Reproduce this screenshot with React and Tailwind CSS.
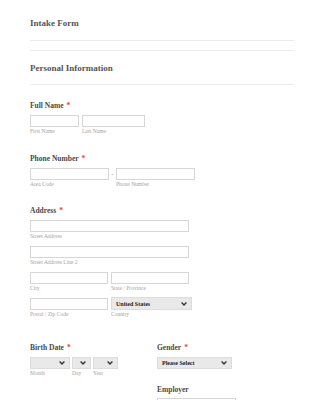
import React from "react";

const Chevron = () => (
  <svg width="6" height="4" viewBox="0 0 6 4" className="shrink-0">
    <path d="M0.6 0.6 L3 3 L5.4 0.6" fill="none" stroke="#333" strokeWidth="1.4" />
  </svg>
);

const Input = ({ w }) => (
  <div className={`h-[12px] border border-[#d6d6d6] bg-white ${w}`} />
);

const Select = ({ w, text }) => (
  <div className={`h-[12px] bg-[#e9e9e9] border border-[#dcdcdc] flex items-center justify-between pl-[4px] pr-[4px] ${w}`}>
    <span className="text-[6px] leading-none text-[#222] font-bold">{text}</span>
    <Chevron />
  </div>
);

const Label = ({ children, req, className = "" }) => (
  <div className={`text-[7.5px] leading-[9px] font-bold text-[#4a4a4a] ${className}`}>
    {children}
    {req && <span className="text-[#f23a3c] ml-[3px]">*</span>}
  </div>
);

const Sub = ({ children, w = "" }) => (
  <div className={`text-[5.5px] leading-[7px] text-[#a3a3a3] mt-[1px] whitespace-nowrap ${w}`}>{children}</div>
);

export default function App() {
  return (
    <div
      className="w-[325px] h-[400px] overflow-hidden bg-white pl-[30px]"
      style={{ fontFamily: '"Liberation Serif", serif' }}
    >
      <div className="w-[264px]">
        <div className="pt-[18px] text-[9px] leading-[11px] font-bold text-[#555]">Intake Form</div>
        <div className="mt-[11px] h-px bg-[#ececec]" />
        <div className="mt-[9px] h-px bg-[#ececec]" />
        <div className="mt-[12px] text-[9px] leading-[11px] font-bold text-[#555]">Personal Information</div>
        <div className="mt-[10px] h-px bg-[#ececec]" />

        {/* Full Name */}
        <Label req className="mt-[16px]">Full Name</Label>
        <div className="mt-[5px] flex gap-[3px]">
          <div>
            <Input w="w-[49px]" />
            <Sub>First Name</Sub>
          </div>
          <div>
            <Input w="w-[63px]" />
            <Sub>Last Name</Sub>
          </div>
        </div>

        {/* Phone */}
        <Label req className="mt-[19px]">Phone Number</Label>
        <div className="mt-[5px] flex">
          <div>
            <Input w="w-[79px]" />
            <Sub>Area Code</Sub>
          </div>
          <div className="w-[7px] text-center text-[7px] leading-[12px] text-[#888]">-</div>
          <div>
            <Input w="w-[79px]" />
            <Sub>Phone Number</Sub>
          </div>
        </div>

        {/* Address */}
        <Label req className="mt-[18px]">Address</Label>
        <div className="mt-[5px]">
          <Input w="w-[159px]" />
          <Sub>Street Address</Sub>
        </div>
        <div className="mt-[6px]">
          <Input w="w-[159px]" />
          <Sub>Street Address Line 2</Sub>
        </div>
        <div className="mt-[6px] flex gap-[3px]">
          <div>
            <Input w="w-[78px]" />
            <Sub>City</Sub>
          </div>
          <div>
            <Input w="w-[78px]" />
            <Sub>State / Province</Sub>
          </div>
        </div>
        <div className="mt-[6px] flex gap-[3px]">
          <div>
            <Input w="w-[78px]" />
            <Sub>Postal / Zip Code</Sub>
          </div>
          <div className="-mt-[1px]">
            <Select w="w-[81px] h-[13px]" text="United States" />
            <Sub>Country</Sub>
          </div>
        </div>

        {/* Birth date + gender */}
        <div className="mt-[25px] flex">
          <div className="w-[127px]">
            <Label req>Birth Date</Label>
            <div className="mt-[5px] flex gap-[2px]">
              <div>
                <Select w="w-[40px]" text="" />
                <Sub>Month</Sub>
              </div>
              <div>
                <Select w="w-[19px]" text="" />
                <Sub>Day</Sub>
              </div>
              <div>
                <Select w="w-[25px]" text="" />
                <Sub>Year</Sub>
              </div>
            </div>
          </div>
          <div>
            <Label req>Gender</Label>
            <div className="mt-[5px]">
              <Select w="w-[75px]" text="Please Select" />
            </div>
            <Label className="mt-[16px]">Employer</Label>
            <div className="mt-[4px]">
              <Input w="w-[79px]" />
            </div>
          </div>
        </div>
      </div>
    </div>
  );
}
